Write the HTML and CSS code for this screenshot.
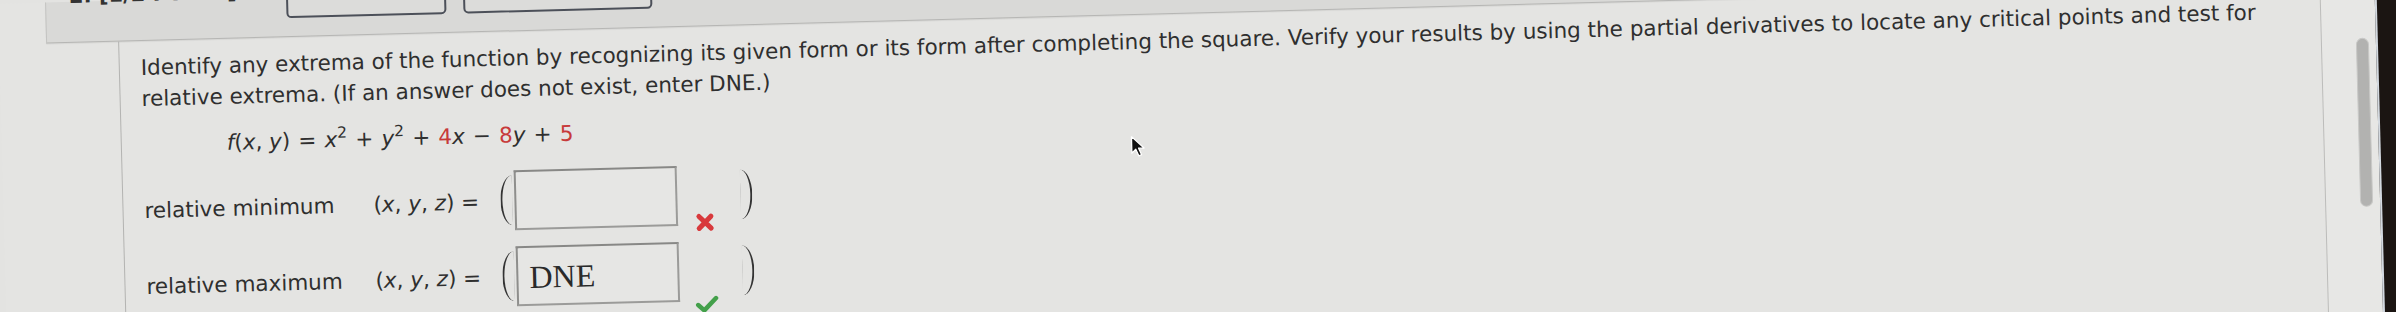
FILE: index.html
```html
<!DOCTYPE html>
<html lang="en">
<head>
<meta charset="utf-8">
<title>Question 2</title>
<link rel="stylesheet" href="styles.css">
</head>
<body>
<div class="photo">
  <div class="main">
    <div class="header">
      <div class="title">2. [1/2 Points]</div>
      <div class="hbox hbox-details"></div>
      <div class="hbox hbox-previous"></div>
    </div>
    <div class="question">
      <div class="qnum"></div>
      <div class="qbody">
        <p class="prompt">Identify any extrema of the function by recognizing its given form or its form after completing the square. Verify your results by using the partial derivatives to locate any critical points and test for relative extrema. (If an answer does not exist, enter DNE.)</p>
        <div class="formula"><i>f</i>(<i>x</i>, <i>y</i>)<span class="op">=</span><i>x</i><sup>2</sup><span class="op">+</span><i>y</i><sup>2</sup><span class="op">+</span><span class="red">4</span><i>x</i><span class="op">−</span><span class="red">8</span><i>y</i><span class="op">+</span><span class="red">5</span></div>
        <div class="answer-row">
          <div class="label">relative minimum</div>
          <div class="math">(<i>x</i>, <i>y</i>, <i>z</i>) =</div>
          <div class="paren paren-open"></div>
          <div class="field"></div>
          <svg class="mark mark-wrong" viewBox="0 0 20 20" width="20" height="20" aria-label="incorrect">
            <path d="M4 4 L16 16 M16 4 L4 16" stroke="#d8393c" stroke-width="5" stroke-linecap="round" fill="none"/>
          </svg>
          <div class="paren paren-close"></div>
        </div>
        <div class="answer-row">
          <div class="label">relative maximum</div>
          <div class="math">(<i>x</i>, <i>y</i>, <i>z</i>) =</div>
          <div class="paren paren-open"></div>
          <div class="field"><span class="field-value">DNE</span></div>
          <svg class="mark mark-right" viewBox="0 0 24 18" width="24" height="18" aria-label="correct">
            <path d="M3 9.5 L9 15 L21 3" stroke="#43a04a" stroke-width="4.5" stroke-linecap="round" stroke-linejoin="round" fill="none"/>
          </svg>
          <div class="paren paren-close"></div>
        </div>
      </div>
    </div>
    <svg class="cursor" viewBox="0 0 16 24" width="16" height="24" aria-hidden="true">
      <path d="M1.5 1.5 L1.5 18 L5.5 14.2 L8.5 21 L11.2 19.8 L8.3 13.2 L13.8 13.2 Z" fill="#111" stroke="#fff" stroke-width="1.3" stroke-linejoin="round"/>
    </svg>
  </div>
  <div class="track">
    <div class="thumb"></div>
  </div>
  <div class="bezel"></div>
</div>
</body>
</html>
```
FILE: styles.css
```css
html, body {
  margin: 0;
  padding: 0;
  background: #e3e3e1;
  overflow: hidden;
  width: 2396px;
  height: 312px;
}

.photo {
  display: flex;
  width: 2470px;
  height: 440px;
  background: #e4e4e2;
  transform: rotate(-1.5deg);
  transform-origin: 142px 75px;
  font-family: "DejaVu Sans", Verdana, sans-serif;
  color: #2f2f2f;
}

.main {
  position: relative;
  width: 2321px;
  flex: none;
}

.header {
  display: flex;
  align-items: flex-start;
  margin-left: 47px;
  height: 41px;
  box-sizing: border-box;
  background: #d9d9d7;
  border-left: 1px solid #c4c4c2;
  border-bottom: 1px solid #b6b6b4;
  box-shadow: 0 1px 1px rgba(0, 0, 0, 0.06);
}

.title {
  width: 217px;
  margin-left: 23px;
  margin-top: -18px;
  font-weight: bold;
  font-size: 21px;
  line-height: 24px;
  color: #333;
  white-space: nowrap;
}

.hbox {
  height: 44px;
  margin-top: -22px;
  box-sizing: border-box;
  border: 2px solid #4c5059;
  border-radius: 5px;
  background: #dcdcda;
}

.hbox-details { width: 160px; }
.hbox-previous { width: 189px; margin-left: 17px; }

.question {
  display: flex;
}

.qnum {
  width: 120px;
  height: 400px;
  box-sizing: border-box;
  border-right: 1px solid #b3b3b1;
  flex: none;
}

.qbody {
  padding: 11px 0 0 21px;
  font-size: 21.5px;
  line-height: 31px;
}

.prompt {
  margin: 0;
  max-width: 2160px;
}

.formula {
  margin: 15px 0 0 84px;
  white-space: nowrap;
}

.formula i,
.math i {
  font-style: italic;
}

.formula sup {
  font-size: 0.72em;
  line-height: 0;
  vertical-align: 0.6em;
}

.op {
  padding: 0 0.38em;
}

.red {
  color: #c73a3a;
}

.answer-row {
  display: flex;
  align-items: center;
  height: 60px;
  margin-top: 20px;
}

.answer-row + .answer-row {
  margin-top: 16px;
}

.label {
  width: 229px;
  flex: none;
  white-space: nowrap;
}

.math {
  width: 120px;
  flex: none;
  white-space: nowrap;
}

.paren {
  width: 12px;
  height: 50px;
  box-sizing: border-box;
  flex: none;
}

.paren-open {
  margin-left: 7px;
  border-left: 2.5px solid #333;
  border-radius: 100% 0 0 100% / 50% 0 0 50%;
}

.paren-close {
  margin-left: 26px;
  border-right: 2.5px solid #333;
  border-radius: 0 100% 100% 0 / 0 50% 50% 0;
}

.field {
  width: 163px;
  height: 60px;
  margin-left: 2px;
  box-sizing: border-box;
  border: 2px solid #9b9b99;
  border-top-color: #888886;
  border-left-color: #8e8e8c;
  background: #e6e6e4;
  display: flex;
  align-items: center;
  padding: 2px 0 0 11px;
  flex: none;
}

.field-value {
  font-family: "Liberation Serif", "Times New Roman", serif;
  font-size: 32px;
  line-height: 1;
  color: #2a2a2a;
}

.mark {
  flex: none;
  align-self: flex-end;
}

.mark-wrong {
  margin-left: 17px;
  margin-bottom: -7px;
}

.mark-right {
  margin-left: 15px;
  margin-bottom: -12px;
}

.mark-right + .paren-close {
  margin-left: 24px;
}

.cursor {
  position: absolute;
  left: 1128px;
  top: 161px;
}

.track {
  width: 55px;
  flex: none;
  box-sizing: border-box;
  border-left: 1px solid #bcbcba;
  background: #e7e7e5;
  padding-left: 34px;
}

.thumb {
  width: 13px;
  height: 169px;
  margin-top: 96px;
  box-sizing: border-box;
  border-radius: 7px;
  background: #b2b2b0;
  border: 1px solid #c9c9c7;
}

.bezel {
  width: 97px;
  flex: none;
  background: #1b1512;
  border-left: 2px solid #d3d9e0;
}
```
